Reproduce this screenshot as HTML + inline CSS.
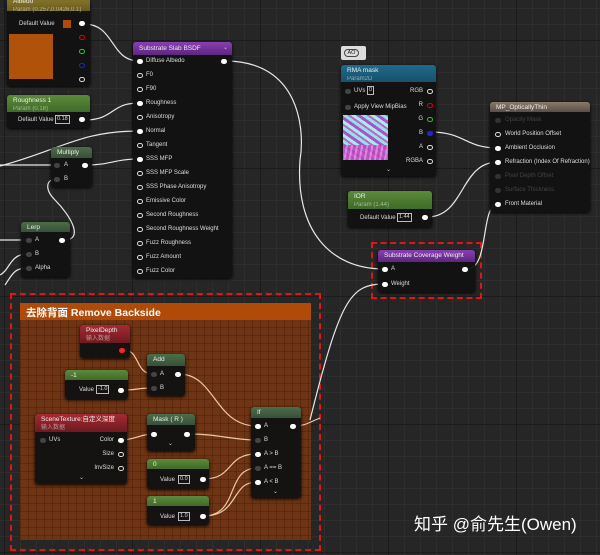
<!DOCTYPE html>
<html><head><meta charset="utf-8"><style>
*{margin:0;padding:0;box-sizing:border-box}
body{width:600px;height:555px;overflow:hidden;background:#262626;font-family:"Liberation Sans","Noto Sans CJK SC",sans-serif;position:relative}
.grid{position:absolute;inset:0;background-image:linear-gradient(#1b1b1b 1px,transparent 1px),linear-gradient(90deg,#1b1b1b 1px,transparent 1px),linear-gradient(#2e2e2e 1px,transparent 1px),linear-gradient(90deg,#2e2e2e 1px,transparent 1px);background-size:128px 128px,128px 128px,16px 16px,16px 16px;background-position:0 40px,4px 0,0 8px,4px 0}
.n{position:absolute;background:rgba(18,18,18,.96);border-radius:3px;box-shadow:0 1px 3px #000;color:#ddd;font-size:6px}
.h{position:absolute;left:0;right:0;top:0;border-radius:3px 3px 0 0;color:#eee;font-size:6.5px;padding:1px 6px;line-height:9px}
.h small{display:block;font-size:6px;opacity:.55}
.t{position:absolute;white-space:nowrap;line-height:8px}
.p{position:absolute;width:6px;height:5px;border-radius:3px;background:#fff}
.o{position:absolute;width:6px;height:5px;border-radius:3px;border:1.2px solid #ddd}
.d{position:absolute;width:6px;height:5px;border-radius:3px;background:#444}
.b{position:absolute;border:1px solid #bbb;font-size:5.5px;line-height:7px;padding:0 1px;color:#ddd}
.cv{position:absolute;font-size:6px;color:#ccc}
.green{background:linear-gradient(#5c8a3a,#3f6a28)}
.dgreen{background:linear-gradient(#4d6d48,#37503a)}
.purple{background:linear-gradient(#8a3fb0,#5b2680)}
.red{background:linear-gradient(#a52a33,#6d1a20)}
svg{position:absolute;left:0;top:0}
</style></head><body>
<div class="grid"></div>

<div style="position:absolute;left:10px;top:293px;width:311px;height:258px;border:2px dashed #e01515"></div>
<div style="position:absolute;left:20px;top:303px;width:291px;height:237px;background:#6e3414;background-image:linear-gradient(rgba(0,0,0,.18) 1px,transparent 1px),linear-gradient(90deg,rgba(0,0,0,.18) 1px,transparent 1px);background-size:8px 8px"></div>
<div style="position:absolute;left:20px;top:303px;width:291px;height:17px;background:#b04a08;color:#fff;font-size:10.5px;font-weight:bold;padding:2px 6px;font-family:'Liberation Sans','Noto Sans CJK SC',sans-serif">去除背面 Remove Backside</div>
<div style="position:absolute;left:371px;top:242px;width:111px;height:57px;border:2px dashed #e01515"></div>

<svg width="600" height="555" fill="none" stroke="#e8e8e8" stroke-width="1.2">
<path d="M84,24 C115,24 110,61 139,61"/>
<path d="M225,61 C300,61 305,130 300,160 C295,230 330,269 384,269"/>
<path d="M84,120 C115,120 110,103 139,103"/>
<path d="M0,166 C60,150 80,131 139,131"/>
<path d="M0,165 L55,165"/>
<path d="M87,165 C110,165 115,159 139,159"/>
<path d="M64,240 C85,240 70,215 55,200 C45,190 45,179 57,179"/>
<path d="M0,240 L27,240"/>
<path d="M0,275 C10,270 10,254 27,254"/>
<path d="M5,285 C12,275 14,268 27,268"/>
<path d="M430,132 C465,132 465,148 498,148"/>
<path d="M427,217 C465,217 460,162 498,162"/>
<path d="M467,269 C490,269 480,204 498,204"/>
<path d="M310,420 C340,300 350,284 384,284"/>
<g stroke="#f0c8a8">
<path d="M124,350 C140,350 135,374 153,374"/>
<path d="M122,390 C140,390 135,388 153,388"/>
<path d="M179,374 C215,374 215,426 257,426"/>
<path d="M121,440 C135,440 140,434 153,434"/>
<path d="M189,434 C220,434 230,440 257,440"/>
<path d="M203,479 C235,479 225,454 257,454"/>
<path d="M203,516 C240,516 225,468 257,468"/>
<path d="M203,516 C240,516 230,482 257,482"/>
<path d="M295,426 C305,426 310,422 320,418"/>
</g>
</svg>

<div class="n" style="left:7px;top:0;width:83px;height:86px">
<div class="h" style="background:linear-gradient(#8b7a2c,#6a5c1f);height:15px;top:-4px">Albedo<small>Param (0.257,0.0426,0.1)</small></div>
<div class="t" style="left:12px;top:20px">Default Value</div>
<div style="position:absolute;left:56px;top:20px;width:8px;height:8px;background:#b04a0a"></div>
<div class="p" style="left:72px;top:21px"></div>
<div style="position:absolute;left:2px;top:34px;width:44px;height:45px;background:#b0520a"></div>
<div class="o" style="left:72px;top:35px;border-color:#d00"></div>
<div class="o" style="left:72px;top:49px;border-color:#2c2"></div>
<div class="o" style="left:72px;top:63px;border-color:#22c"></div>
<div class="o" style="left:72px;top:77px"></div>
</div>

<div class="n" style="left:7px;top:95px;width:83px;height:33px">
<div class="h green" style="height:17px">Roughness 1<small>Param (0.18)</small></div>
<div class="t" style="left:11px;top:21px">Default Value</div>
<div class="b" style="left:48px;top:20px">0.18</div>
<div class="p" style="left:72px;top:22px"></div>
</div>

<div class="n" style="left:133px;top:42px;width:99px;height:236px">
<div class="h purple" style="height:13px;padding-top:2px">Substrate Slab BSDF</div>
<div class="cv" style="right:4px;top:2px">⌄</div>
<div class="p" style="left:4px;top:17px"></div><div class="t" style="left:13px;top:15px">Diffuse Albedo</div>
<div class="p" style="left:88px;top:17px"></div>
<div class="o" style="left:4px;top:31px"></div><div class="t" style="left:13px;top:29px">F0</div>
<div class="o" style="left:4px;top:45px"></div><div class="t" style="left:13px;top:43px">F90</div>
<div class="p" style="left:4px;top:59px"></div><div class="t" style="left:13px;top:57px">Roughness</div>
<div class="o" style="left:4px;top:73px"></div><div class="t" style="left:13px;top:71px">Anisotropy</div>
<div class="p" style="left:4px;top:87px"></div><div class="t" style="left:13px;top:85px">Normal</div>
<div class="o" style="left:4px;top:101px"></div><div class="t" style="left:13px;top:99px">Tangent</div>
<div class="p" style="left:4px;top:115px"></div><div class="t" style="left:13px;top:113px">SSS MFP</div>
<div class="o" style="left:4px;top:129px"></div><div class="t" style="left:13px;top:127px">SSS MFP Scale</div>
<div class="o" style="left:4px;top:143px"></div><div class="t" style="left:13px;top:141px">SSS Phase Anisotropy</div>
<div class="o" style="left:4px;top:157px"></div><div class="t" style="left:13px;top:155px">Emissive Color</div>
<div class="o" style="left:4px;top:171px"></div><div class="t" style="left:13px;top:169px">Second Roughness</div>
<div class="o" style="left:4px;top:185px"></div><div class="t" style="left:13px;top:183px">Second Roughness Weight</div>
<div class="o" style="left:4px;top:199px"></div><div class="t" style="left:13px;top:197px">Fuzz Roughness</div>
<div class="o" style="left:4px;top:213px"></div><div class="t" style="left:13px;top:211px">Fuzz Amount</div>
<div class="o" style="left:4px;top:227px"></div><div class="t" style="left:13px;top:225px">Fuzz Color</div>
</div>

<div class="n" style="left:51px;top:147px;width:41px;height:40px">
<div class="h dgreen" style="height:11px">Multiply</div>
<div class="d" style="left:3px;top:16px"></div><div class="t" style="left:13px;top:14px">A</div>
<div class="p" style="left:31px;top:16px"></div>
<div class="d" style="left:3px;top:30px"></div><div class="t" style="left:13px;top:28px">B</div>
</div>

<div class="n" style="left:21px;top:222px;width:49px;height:55px">
<div class="h dgreen" style="height:10px">Lerp</div>
<div class="d" style="left:5px;top:16px"></div><div class="t" style="left:14px;top:14px">A</div>
<div class="p" style="left:38px;top:16px"></div>
<div class="d" style="left:5px;top:30px"></div><div class="t" style="left:14px;top:28px">B</div>
<div class="d" style="left:5px;top:44px"></div><div class="t" style="left:14px;top:42px">Alpha</div>
</div>

<div style="position:absolute;left:341px;top:46px;width:25px;height:14px;background:#ddd;border-radius:2px"><div style="position:absolute;left:3px;top:3px;width:15px;height:8px;border:1px solid #444;border-radius:4px;font-size:5.5px;line-height:6px;text-align:center;color:#222">AO</div></div>

<div class="n" style="left:341px;top:65px;width:95px;height:111px">
<div class="h" style="background:linear-gradient(#1f6a8c,#17506a);height:17px">RMA mask<small>Param2D</small></div>
<div class="d" style="left:4px;top:24px"></div><div class="t" style="left:13px;top:22px">UVs</div><div class="b" style="left:26px;top:21px">0</div>
<div class="d" style="left:4px;top:40px"></div><div class="t" style="left:13px;top:38px">Apply View MipBias</div>
<div style="position:absolute;left:2px;top:50px;width:45px;height:45px;background:repeating-linear-gradient(35deg,#b050c8 0 3px,#8ee4ea 3px 6px,#c860c0 6px 8px,#a0f0f0 8px 11px),#9de"></div>
<div style="position:absolute;left:2px;top:80px;width:45px;height:15px;background:repeating-linear-gradient(100deg,#c040c0 0 3px,#e080e0 3px 5px);opacity:.85"></div>
<div class="t" style="right:13px;top:22px">RGB</div><div class="o" style="right:3px;top:24px"></div>
<div class="t" style="right:13px;top:36px">R</div><div class="o" style="right:3px;top:38px;border-color:#d00"></div>
<div class="t" style="right:13px;top:50px">G</div><div class="o" style="right:3px;top:52px;border-color:#2c2"></div>
<div class="t" style="right:13px;top:64px">B</div><div class="p" style="right:3px;top:66px;background:#22d"></div>
<div class="t" style="right:13px;top:78px">A</div><div class="o" style="right:3px;top:80px"></div>
<div class="t" style="right:13px;top:92px">RGBA</div><div class="o" style="right:3px;top:94px"></div>
<div class="cv" style="left:45px;top:101px">⌄</div>
</div>

<div class="n" style="left:490px;top:102px;width:100px;height:110px">
<div class="h" style="background:linear-gradient(#8a7a6a,#5a4e44);height:10px">MP_OpticallyThin</div>
<div class="d" style="left:5px;top:16px;background:#333"></div><div class="t" style="left:15px;top:14px;color:#444">Opacity Mask</div>
<div class="o" style="left:5px;top:30px"></div><div class="t" style="left:15px;top:28px">World Position Offset</div>
<div class="p" style="left:5px;top:44px"></div><div class="t" style="left:15px;top:42px">Ambient Occlusion</div>
<div class="p" style="left:5px;top:58px"></div><div class="t" style="left:15px;top:56px">Refraction (Index Of Refraction)</div>
<div class="d" style="left:5px;top:72px;background:#333"></div><div class="t" style="left:15px;top:70px;color:#444">Pixel Depth Offset</div>
<div class="d" style="left:5px;top:86px;background:#333"></div><div class="t" style="left:15px;top:84px;color:#444">Surface Thickness</div>
<div class="p" style="left:5px;top:100px"></div><div class="t" style="left:15px;top:98px">Front Material</div>
</div>

<div class="n" style="left:348px;top:191px;width:84px;height:36px">
<div class="h green" style="height:18px">IOR<small>Param (1.44)</small></div>
<div class="t" style="left:12px;top:23px">Default Value</div>
<div class="b" style="left:49px;top:22px">1.44</div>
<div class="p" style="left:74px;top:24px"></div>
</div>

<div class="n" style="left:378px;top:250px;width:97px;height:42px">
<div class="h purple" style="height:12px">Substrate Coverage Weight</div>
<div class="p" style="left:4px;top:17px"></div><div class="t" style="left:13px;top:15px">A</div>
<div class="p" style="left:84px;top:17px"></div>
<div class="p" style="left:4px;top:32px"></div><div class="t" style="left:13px;top:30px">Weight</div>
</div>

<div class="n" style="left:80px;top:325px;width:50px;height:33px">
<div class="h red" style="height:18px">PixelDepth<small>输入数据</small></div>
<div class="p" style="left:39px;top:23px;background:#f22"></div>
</div>

<div class="n" style="left:147px;top:354px;width:38px;height:42px">
<div class="h dgreen" style="height:12px">Add</div>
<div class="d" style="left:4px;top:18px"></div><div class="t" style="left:13px;top:16px">A</div>
<div class="p" style="left:28px;top:18px"></div>
<div class="d" style="left:4px;top:32px"></div><div class="t" style="left:13px;top:30px">B</div>
</div>

<div class="n" style="left:65px;top:370px;width:63px;height:29px">
<div class="h green" style="height:10px">-1</div>
<div class="t" style="left:14px;top:16px">Value</div><div class="b" style="left:31px;top:15px">-1.0</div>
<div class="p" style="left:53px;top:18px"></div>
</div>

<div class="n" style="left:35px;top:414px;width:92px;height:70px">
<div class="h red" style="height:18px">SceneTexture:自定义深度<small>输入数据</small></div>
<div class="d" style="left:5px;top:24px"></div><div class="t" style="left:14px;top:22px">UVs</div>
<div class="t" style="right:13px;top:22px">Color</div><div class="p" style="right:3px;top:24px"></div>
<div class="t" style="right:13px;top:36px">Size</div><div class="o" style="right:3px;top:38px"></div>
<div class="t" style="right:13px;top:50px">InvSize</div><div class="o" style="right:3px;top:52px"></div>
<div class="cv" style="left:44px;top:60px">⌄</div>
</div>

<div class="n" style="left:147px;top:414px;width:48px;height:37px">
<div class="h dgreen" style="height:11px">Mask ( R )</div>
<div class="p" style="left:4px;top:18px"></div>
<div class="p" style="left:37px;top:18px"></div>
<div class="cv" style="left:21px;top:26px">⌄</div>
</div>

<div class="n" style="left:147px;top:459px;width:62px;height:30px">
<div class="h green" style="height:10px">0</div>
<div class="t" style="left:13px;top:17px">Value</div><div class="b" style="left:31px;top:16px">0.0</div>
<div class="p" style="left:53px;top:18px"></div>
</div>

<div class="n" style="left:147px;top:496px;width:62px;height:29px">
<div class="h green" style="height:10px">1</div>
<div class="t" style="left:13px;top:17px">Value</div><div class="b" style="left:31px;top:16px">1.0</div>
<div class="p" style="left:53px;top:18px"></div>
</div>

<div class="n" style="left:251px;top:407px;width:50px;height:91px">
<div class="h dgreen" style="height:11px">If</div>
<div class="p" style="left:4px;top:17px"></div><div class="t" style="left:13px;top:15px">A</div>
<div class="p" style="left:39px;top:17px"></div>
<div class="d" style="left:4px;top:31px"></div><div class="t" style="left:13px;top:29px">B</div>
<div class="p" style="left:4px;top:45px"></div><div class="t" style="left:13px;top:43px">A &gt; B</div>
<div class="d" style="left:4px;top:59px"></div><div class="t" style="left:13px;top:57px">A == B</div>
<div class="p" style="left:4px;top:73px"></div><div class="t" style="left:13px;top:71px">A &lt; B</div>
<div class="cv" style="left:22px;top:81px">⌄</div>
</div>

<div style="position:absolute;left:414px;top:513px;color:#fff;font-size:17px;line-height:24px;white-space:nowrap;font-family:'Liberation Sans','Noto Sans CJK SC',sans-serif">知乎 @俞先生(Owen)</div>
</body></html>
